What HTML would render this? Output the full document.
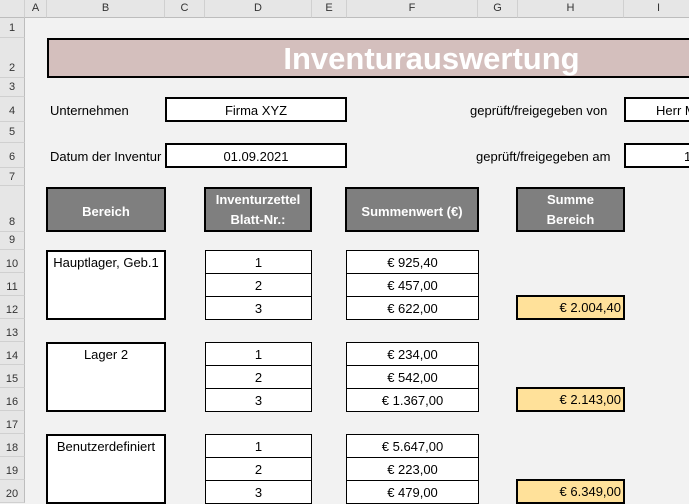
<!DOCTYPE html>
<html><head><meta charset="utf-8"><style>
body{margin:0;width:689px;height:492px;overflow:hidden;background:#f2f2f2;font-family:"Liberation Sans","Noto Sans CJK KR",sans-serif;position:relative}
div{position:absolute;box-sizing:border-box}
.ch{top:0;height:18px;background:#e6e6e6;border-right:1px solid #d0d0d0;border-bottom:1px solid #bdbdbd;font-size:11px;color:#333;text-align:center;line-height:17px}
.rh{left:0;width:25px;background:#e6e6e6;border-bottom:1px solid #d0d0d0;border-right:1px solid #bdbdbd;font-size:11px;color:#333;text-align:center;padding-top:5px}
.box{background:#fff;border:2px solid #000;font-size:13px;text-align:center;color:#000}
.c{background:#fff;border:1px solid #000;font-size:13px;text-align:center;line-height:23px}
.hd{background:#7f7f7f;border:2px solid #000;color:#fff;font-weight:bold;font-size:13px;text-align:center;display:flex;align-items:center;justify-content:center;line-height:20px}
.s{background:#ffe19a;border:2px solid #000;font-size:13px;text-align:right;line-height:22px;padding-right:2px}
.l{font-size:13px;color:#000}
</style></head><body>
<div class="ch" style="left:0;width:25px"></div>
<div class="ch" style="left:25px;width:22px">A</div>
<div class="ch" style="left:47px;width:118px">B</div>
<div class="ch" style="left:165px;width:40px">C</div>
<div class="ch" style="left:205px;width:107px">D</div>
<div class="ch" style="left:312px;width:35px">E</div>
<div class="ch" style="left:347px;width:131px">F</div>
<div class="ch" style="left:478px;width:40px">G</div>
<div class="ch" style="left:518px;width:106px">H</div>
<div class="ch" style="left:624px;width:70px">I</div>

<div class="rh" style="top:18px;height:20px;padding-top:4px">1</div>
<div class="rh" style="top:38px;height:40px;padding-top:24px">2</div>
<div class="rh" style="top:78px;height:19px;padding-top:3px">3</div>
<div class="rh" style="top:97px;height:25px;padding-top:8px">4</div>
<div class="rh" style="top:122px;height:21px;padding-top:4px">5</div>
<div class="rh" style="top:143px;height:25px;padding-top:8px">6</div>
<div class="rh" style="top:168px;height:18px;padding-top:3px">7</div>
<div class="rh" style="top:186px;height:46px;padding-top:30px">8</div>
<div class="rh" style="top:232px;height:18px;padding-top:2px">9</div>
<div class="rh" style="top:250px;height:23px;padding-top:8px">10</div>
<div class="rh" style="top:273px;height:23px;padding-top:8px">11</div>
<div class="rh" style="top:296px;height:23px;padding-top:8px">12</div>
<div class="rh" style="top:319px;height:23px;padding-top:8px">13</div>
<div class="rh" style="top:342px;height:23px;padding-top:8px">14</div>
<div class="rh" style="top:365px;height:23px;padding-top:8px">15</div>
<div class="rh" style="top:388px;height:23px;padding-top:8px">16</div>
<div class="rh" style="top:411px;height:23px;padding-top:8px">17</div>
<div class="rh" style="top:434px;height:23px;padding-top:8px">18</div>
<div class="rh" style="top:457px;height:23px;padding-top:8px">19</div>
<div class="rh" style="top:480px;height:23px;padding-top:8px">20</div>

<div style="left:47px;top:38px;width:660px;height:40px;background:#d4bfbd;border:2px solid #000"></div>
<div style="left:200px;top:39px;width:463px;height:40px;color:#fff;font-weight:bold;font-size:31px;text-align:center;line-height:40px">Inventurauswertung</div>

<div class="l" style="left:50px;top:103px">Unternehmen</div>
<div class="box" style="left:165px;top:97px;width:182px;height:25px;line-height:23px">Firma XYZ</div>
<div class="l" style="left:50px;top:149px;width:114px;overflow:hidden;white-space:nowrap">Datum der Inventur</div>
<div class="box" style="left:165px;top:143px;width:182px;height:25px;line-height:23px">01.09.2021</div>
<div class="l" style="left:470px;top:103px">geprüft/freigegeben von</div>
<div class="box" style="left:624px;top:97px;width:80px;height:25px;line-height:23px;text-align:left;padding-left:30px;white-space:nowrap">Herr M</div>
<div class="l" style="left:476px;top:149px">geprüft/freigegeben am</div>
<div class="box" style="left:624px;top:143px;width:80px;height:25px;line-height:23px;text-align:left;padding-left:58px">1</div>

<div class="hd" style="left:46px;top:187px;width:120px;height:45px;padding-top:4px">Bereich</div>
<div class="hd" style="left:204px;top:187px;width:108px;height:45px">Inventurzettel<br>Blatt-Nr.:</div>
<div class="hd" style="left:345px;top:187px;width:134px;height:45px;padding-top:4px">Summenwert (€)</div>
<div class="hd" style="left:516px;top:187px;width:109px;height:45px">Summe<br>Bereich</div>

<div class="box" style="left:46px;top:250px;width:120px;height:70px;padding-top:3px">Hauptlager, Geb.1</div>
<div class="box" style="left:46px;top:342px;width:120px;height:70px;padding-top:3px">Lager 2</div>
<div class="box" style="left:46px;top:434px;width:120px;height:70px;padding-top:3px">Benutzerdefiniert</div>

<div class="c" style="left:205px;top:250px;width:107px;height:24px">1</div>
<div class="c" style="left:205px;top:273px;width:107px;height:24px">2</div>
<div class="c" style="left:205px;top:296px;width:107px;height:24px">3</div>
<div class="c" style="left:205px;top:342px;width:107px;height:24px">1</div>
<div class="c" style="left:205px;top:365px;width:107px;height:24px">2</div>
<div class="c" style="left:205px;top:388px;width:107px;height:24px">3</div>
<div class="c" style="left:205px;top:434px;width:107px;height:24px">1</div>
<div class="c" style="left:205px;top:457px;width:107px;height:24px">2</div>
<div class="c" style="left:205px;top:480px;width:107px;height:24px">3</div>

<div class="c" style="left:346px;top:250px;width:133px;height:24px">€ 925,40</div>
<div class="c" style="left:346px;top:273px;width:133px;height:24px">€ 457,00</div>
<div class="c" style="left:346px;top:296px;width:133px;height:24px">€ 622,00</div>
<div class="c" style="left:346px;top:342px;width:133px;height:24px">€ 234,00</div>
<div class="c" style="left:346px;top:365px;width:133px;height:24px">€ 542,00</div>
<div class="c" style="left:346px;top:388px;width:133px;height:24px">€ 1.367,00</div>
<div class="c" style="left:346px;top:434px;width:133px;height:24px">€ 5.647,00</div>
<div class="c" style="left:346px;top:457px;width:133px;height:24px">€ 223,00</div>
<div class="c" style="left:346px;top:480px;width:133px;height:24px">€ 479,00</div>

<div class="s" style="left:516px;top:295px;width:109px;height:25px">€ 2.004,40</div>
<div class="s" style="left:516px;top:387px;width:109px;height:25px">€ 2.143,00</div>
<div class="s" style="left:516px;top:479px;width:109px;height:25px">€ 6.349,00</div>
</body></html>
